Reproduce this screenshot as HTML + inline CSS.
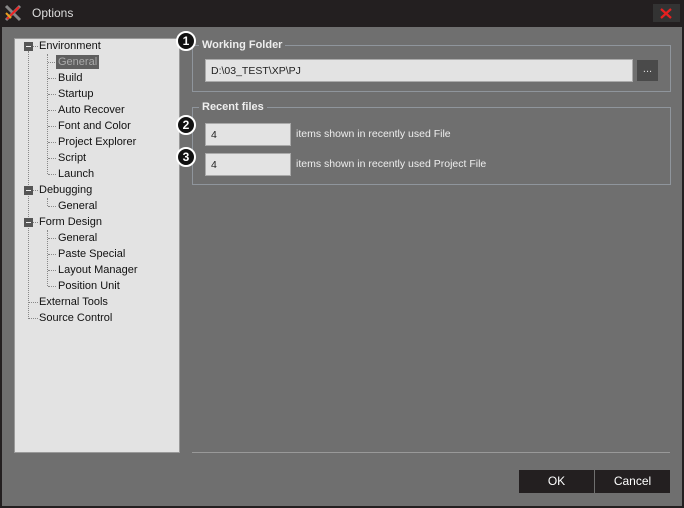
<!DOCTYPE html>
<html><head><style>
*{margin:0;padding:0;box-sizing:border-box}
body{width:684px;height:508px;background:#6f6f6f;font-family:"Liberation Sans",sans-serif;font-size:11px;position:relative;overflow:hidden}
.a{position:absolute}
#tb{left:0;top:0;width:684px;height:27px;background:#231f20}
#frame{left:0;top:0;width:684px;height:508px;border:2px solid #231f20;border-top:none}
.t{position:absolute;color:#111;white-space:nowrap;line-height:14px}
.vl{position:absolute;border-left:1px dotted #888;width:0}
.hl{position:absolute;border-top:1px dotted #888;height:0}
.bx{position:absolute;width:9px;height:9px;background:#555;}
.bx:after{content:"";position:absolute;left:2px;top:4px;width:5px;height:1px;background:#eee}
.grp{position:absolute;border:1px solid #8f959c}
.lbl{position:absolute;color:#eee;font-weight:bold;background:#6f6f6f;padding:0 3px;line-height:14px}
.inp{position:absolute;background:#e3e3e3;border:1px solid #aaa;color:#222;padding-left:5px;line-height:22px;font-size:10.5px}
.num{position:absolute;width:20px;height:20px;border-radius:50%;background:#111;border:2px solid #fff;color:#fff;font-weight:bold;text-align:center;line-height:16px;font-size:12px}
.btn{position:absolute;background:#231f20;color:#fff;text-align:center;line-height:23px;font-size:12px}
.txt{position:absolute;color:#eee;line-height:14px;font-size:10.5px}
</style></head><body>
<div class="a" id="tb"></div>
<div class="a" id="frame"></div>
<svg class="a" style="left:4px;top:4px" width="18" height="18" viewBox="0 0 18 18"><path d="M2 2L16 16M16 2L2 16" stroke="#888" stroke-width="3"/><path d="M3 15L15 3" stroke="#e22" stroke-width="2"/><path d="M2 9L7 14" stroke="#e8a020" stroke-width="2"/></svg>
<div class="a" style="left:32px;top:6px;color:#ddd;font-size:12px">Options</div>
<div class="a" style="left:653px;top:4px;width:27px;height:18px;background:#333"></div>
<svg class="a" style="left:660px;top:8px" width="12" height="11" viewBox="0 0 12 11"><path d="M1 1L11 10M11 1L1 10" stroke="#e62020" stroke-width="2.2"/></svg>

<div class="a" style="left:14px;top:38px;width:166px;height:415px;background:#e3e3e3;border:1px solid #999"></div>
<div class="vl" style="left:28px;top:51px;height:268px"></div>
<div class="vl" style="left:47px;top:54px;height:120px"></div>
<div class="vl" style="left:47px;top:198px;height:8px"></div>
<div class="vl" style="left:47px;top:230px;height:56px"></div>
<div class="hl" style="left:33px;top:46px;width:5px"></div>
<div class="hl" style="left:33px;top:190px;width:5px"></div>
<div class="hl" style="left:33px;top:222px;width:5px"></div>
<div class="hl" style="left:29px;top:302px;width:9px"></div>
<div class="hl" style="left:29px;top:318px;width:9px"></div>
<div class="bx" style="left:24px;top:42px"></div>
<div class="bx" style="left:24px;top:186px"></div>
<div class="bx" style="left:24px;top:218px"></div>
<div class="t" style="left:39px;top:39px">Environment</div>
<div class="t" style="left:56px;top:55px;background:#5f5f5f;color:#aaa;padding:0 2px">General</div>
<div class="hl" style="left:48px;top:62px;width:7px"></div>
<div class="hl" style="left:48px;top:78px;width:8px"></div><div class="t" style="left:58px;top:71px">Build</div>
<div class="hl" style="left:48px;top:94px;width:8px"></div><div class="t" style="left:58px;top:87px">Startup</div>
<div class="hl" style="left:48px;top:110px;width:8px"></div><div class="t" style="left:58px;top:103px">Auto Recover</div>
<div class="hl" style="left:48px;top:126px;width:8px"></div><div class="t" style="left:58px;top:119px">Font and Color</div>
<div class="hl" style="left:48px;top:142px;width:8px"></div><div class="t" style="left:58px;top:135px">Project Explorer</div>
<div class="hl" style="left:48px;top:158px;width:8px"></div><div class="t" style="left:58px;top:151px">Script</div>
<div class="hl" style="left:48px;top:174px;width:8px"></div><div class="t" style="left:58px;top:167px">Launch</div>
<div class="t" style="left:39px;top:183px">Debugging</div>
<div class="hl" style="left:48px;top:206px;width:8px"></div><div class="t" style="left:58px;top:199px">General</div>
<div class="t" style="left:39px;top:215px">Form Design</div>
<div class="hl" style="left:48px;top:238px;width:8px"></div><div class="t" style="left:58px;top:231px">General</div>
<div class="hl" style="left:48px;top:254px;width:8px"></div><div class="t" style="left:58px;top:247px">Paste Special</div>
<div class="hl" style="left:48px;top:270px;width:8px"></div><div class="t" style="left:58px;top:263px">Layout Manager</div>
<div class="hl" style="left:48px;top:286px;width:8px"></div><div class="t" style="left:58px;top:279px">Position Unit</div>
<div class="t" style="left:39px;top:295px">External Tools</div>
<div class="t" style="left:39px;top:311px">Source Control</div>

<div class="grp" style="left:192px;top:45px;width:479px;height:47px"></div>
<div class="lbl" style="left:199px;top:38px">Working Folder</div>
<div class="inp" style="left:205px;top:59px;width:428px;height:23px">D:\03_TEST\XP\PJ</div>
<div class="a" style="left:637px;top:60px;width:21px;height:21px;background:#4a4a4a;color:#ddd;text-align:center;line-height:18px">...</div>

<div class="grp" style="left:192px;top:107px;width:479px;height:78px"></div>
<div class="lbl" style="left:199px;top:100px">Recent files</div>
<div class="inp" style="left:205px;top:123px;width:86px;height:23px">4</div>
<div class="txt" style="left:296px;top:127px">items shown in recently used File</div>
<div class="inp" style="left:205px;top:153px;width:86px;height:23px">4</div>
<div class="txt" style="left:296px;top:157px">items shown in recently used Project File</div>

<div class="num" style="left:176px;top:31px">1</div>
<div class="num" style="left:176px;top:115px">2</div>
<div class="num" style="left:176px;top:147px">3</div>

<div class="a" style="left:192px;top:452px;width:478px;height:1px;background:#999"></div>
<div class="btn" style="left:519px;top:470px;width:75px;height:23px">OK</div>
<div class="btn" style="left:595px;top:470px;width:75px;height:23px">Cancel</div>
</body></html>
